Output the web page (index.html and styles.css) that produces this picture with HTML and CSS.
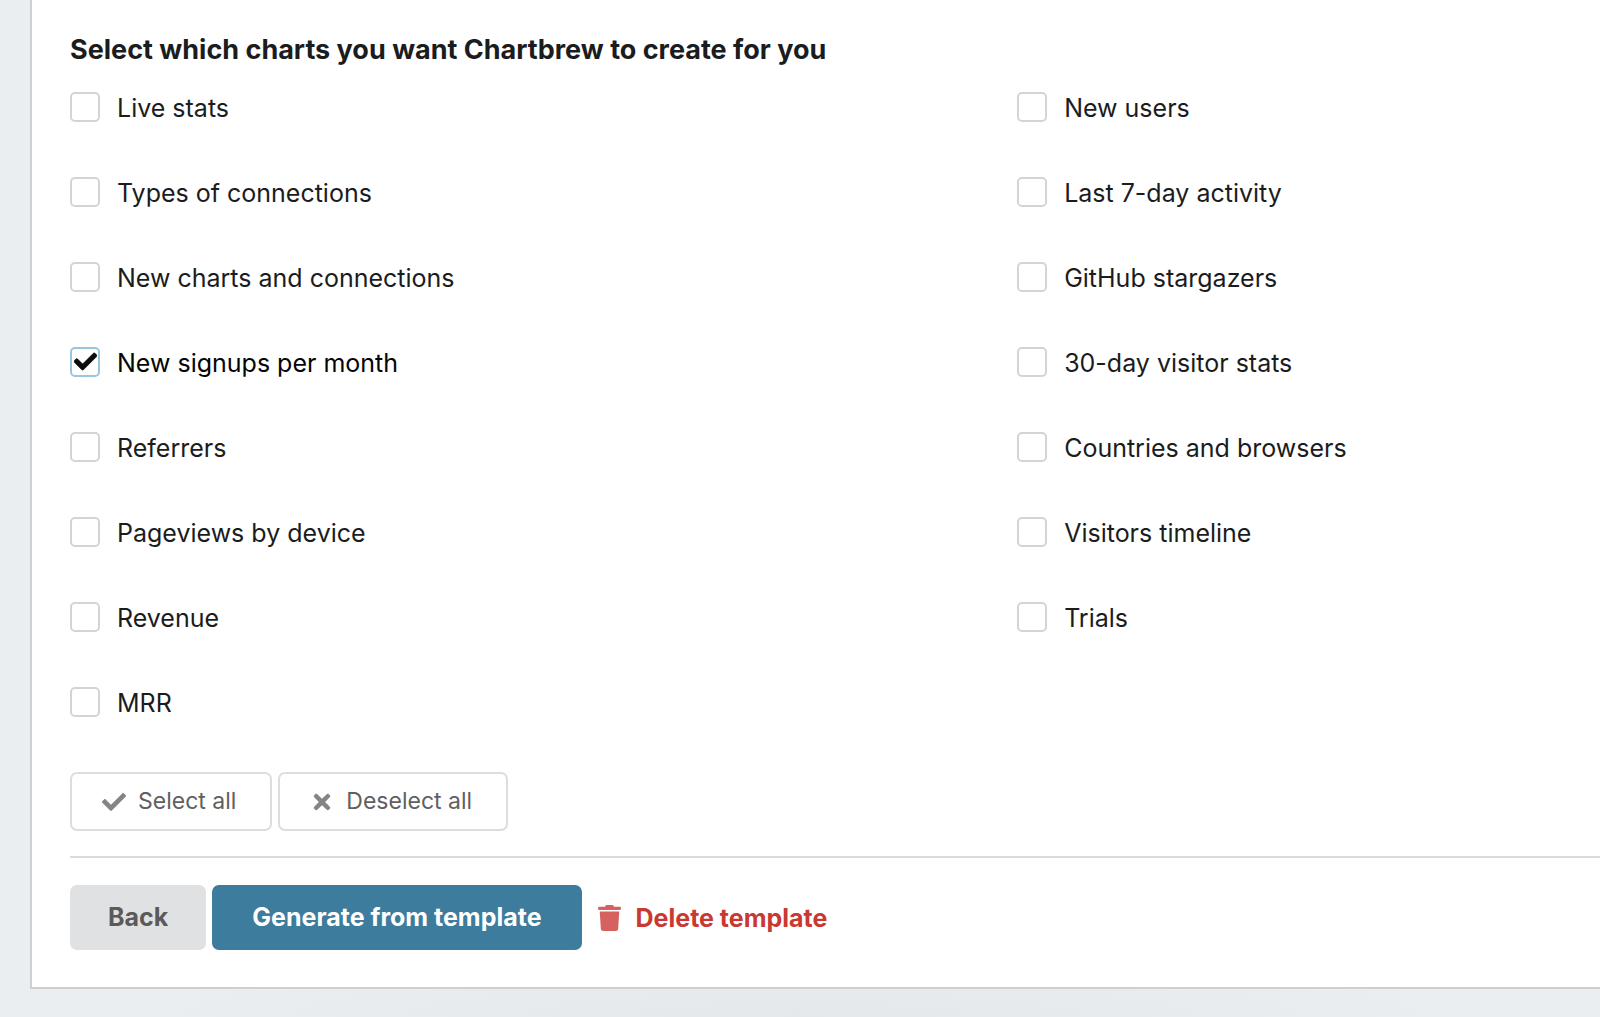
FILE: index.html
```html
<!DOCTYPE html>
<html lang="en">
<head>
<meta charset="utf-8">
<meta name="viewport" content="width=device-width, initial-scale=1">
<title>Chartbrew template</title>
<link rel="stylesheet" href="styles.css">
</head>
<body>
<main class="panel">
  <form class="template-form">
    <h1 class="title" id="charts-title">Select which charts you want Chartbrew to create for you</h1>
    <div class="charts" role="group" aria-labelledby="charts-title">
      <label class="chart"><input class="box" type="checkbox"><span class="name">Live stats</span></label>
      <label class="chart"><input class="box" type="checkbox"><span class="name">New users</span></label>
      <label class="chart"><input class="box" type="checkbox"><span class="name">Types of connections</span></label>
      <label class="chart"><input class="box" type="checkbox"><span class="name">Last 7-day activity</span></label>
      <label class="chart"><input class="box" type="checkbox"><span class="name">New charts and connections</span></label>
      <label class="chart"><input class="box" type="checkbox"><span class="name">GitHub stargazers</span></label>
      <label class="chart"><span class="tick-box"><input class="box" type="checkbox" checked><svg class="tick" viewBox="0 0 512 512" aria-hidden="true"><path d="M173.900 439.400L7.500 273c-10-10-10-26.200 0-36.200l36.200-36.200c10-10 26.200-10 36.200 0L192 312.700 432.100 72.600c10-10 26.200-10 36.200 0l36.200 36.200c10 10 10 26.200 0 36.200L210.100 439.400c-10 10-26.200 10-36.200 0z"/></svg></span><span class="name">New signups per month</span></label>
      <label class="chart"><input class="box" type="checkbox"><span class="name">30-day visitor stats</span></label>
      <label class="chart"><input class="box" type="checkbox"><span class="name">Referrers</span></label>
      <label class="chart"><input class="box" type="checkbox"><span class="name">Countries and browsers</span></label>
      <label class="chart"><input class="box" type="checkbox"><span class="name">Pageviews by device</span></label>
      <label class="chart"><input class="box" type="checkbox"><span class="name">Visitors timeline</span></label>
      <label class="chart"><input class="box" type="checkbox"><span class="name">Revenue</span></label>
      <label class="chart"><input class="box" type="checkbox"><span class="name">Trials</span></label>
      <label class="chart"><input class="box" type="checkbox"><span class="name">MRR</span></label>
    </div>
    <div class="row">
      <button class="btn outline" type="button"><svg class="icon" viewBox="0 0 512 512" aria-hidden="true"><path d="M173.900 439.400L7.500 273c-10-10-10-26.200 0-36.200l36.200-36.200c10-10 26.200-10 36.200 0L192 312.700 432.100 72.600c10-10 26.200-10 36.200 0l36.200 36.200c10 10 10 26.200 0 36.200L210.100 439.400c-10 10-26.200 10-36.200 0z"/></svg>Select all</button>
      <button class="btn outline" type="button"><svg class="icon" viewBox="-80 0 512 512" aria-hidden="true"><path d="M242.700 256l100.100-100.100c12.300-12.300 12.300-32.200 0-44.500l-22.200-22.200c-12.300-12.300-32.200-12.300-44.500 0L176 189.300 75.900 89.200c-12.300-12.300-32.200-12.300-44.500 0L9.200 111.500c-12.300 12.300-12.300 32.200 0 44.500L109.300 256 9.200 356.100c-12.300 12.300-12.300 32.200 0 44.500l22.200 22.200c12.300 12.300 32.200 12.300 44.500 0L176 322.700l100.100 100.100c12.300 12.300 32.200 12.300 44.500 0l22.200-22.200c12.300-12.300 12.300-32.200 0-44.500L242.700 256z"/></svg>Deselect all</button>
    </div>
    <hr class="divider">
    <div class="row">
      <button class="btn solid back" type="button">Back</button>
      <button class="btn solid primary" type="submit">Generate from template</button>
      <button class="btn delete" type="button"><svg class="trash" viewBox="0 0 448 512" aria-hidden="true"><path d="M432 32H312l-9.400-18.700A24 24 0 0 0 281.100 0H166.800a23.700 23.700 0 0 0-21.400 13.300L136 32H16A16 16 0 0 0 0 48v32a16 16 0 0 0 16 16h416a16 16 0 0 0 16-16V48a16 16 0 0 0-16-16zM32 128l21.200 339a48 48 0 0 0 47.900 45h245.800a48 48 0 0 0 47.900-45L416 128z"/></svg>Delete template</button>
    </div>
  </form>
</main>
</body>
</html>
```
FILE: styles.css
```css
* {
  box-sizing: border-box;
}

body {
  margin: 0;
  min-height: 100vh;
  padding-left: 30px;
  background: radial-gradient(ellipse 42% 60px at 50% 100%, #e4e8eb, #eaeef1) #eaeef1;
  color: #1b1c1d;
  font-family: Inter, "Liberation Sans", sans-serif;
  font-size: 25px;
  overflow-x: hidden;
}

.panel {
  padding: 33px 0 37px 38px;
  background: #fff;
  border: solid #cdcfd1;
  border-width: 0 0 2px 2px;
}

.title {
  margin: 0 0 25px;
  font-size: 27px;
  line-height: 34px;
  font-weight: 700;
}

.charts {
  display: grid;
  grid-template-columns: 13fr 8fr;
  row-gap: 55px;
  margin-bottom: 55px;
}

.chart {
  display: flex;
  align-items: center;
  gap: 17px;
  justify-self: start;
  white-space: nowrap;
}

.chart:has(:checked) {
  color: #050505;
}

.name {
  padding-top: 2px;
  line-height: 28px;
}

.box {
  appearance: none;
  display: block;
  flex: none;
  width: 30px;
  height: 30px;
  margin: 0;
  border: 2px solid #d4d4d5;
  border-radius: 5px;
  background: #fff;
}

.box:checked {
  border-color: #9ac5dc;
}

.tick-box {
  position: relative;
}

.tick {
  position: absolute;
  top: 3px;
  left: 4px;
  width: 23px;
  height: 23px;
  fill: #0c0c0c;
  stroke: #0c0c0c;
  stroke-width: 16;
  pointer-events: none;
}

.row {
  display: flex;
  gap: 6px;
}

.btn {
  display: flex;
  align-items: center;
  border: 0;
  border-radius: 7px;
  background: none;
  font: inherit;
  white-space: nowrap;
}

.outline {
  gap: 12px;
  padding: 0 34px 0 30px;
  border: 2px solid #dcdddd;
  color: #5f6061;
  font-size: 23px;
  line-height: 55px;
}

.icon {
  width: 24px;
  height: 24px;
  fill: #858585;
}

.divider {
  height: 2px;
  margin: 25px 0 27px;
  border: 0;
  background: #dadbdc;
}

.solid {
  padding: 0 38px;
  font-weight: 700;
  line-height: 65px;
}

.back {
  background: #e0e1e2;
  color: #5a5a5b;
}

.primary {
  padding: 0 40px;
  background: #3d7c9c;
  color: #fff;
}

.delete {
  gap: 15px;
  padding: 0 10px;
  color: #c93832;
  font-weight: 700;
}

.trash {
  width: 23px;
  height: 26px;
  fill: #d5625e;
}
```
